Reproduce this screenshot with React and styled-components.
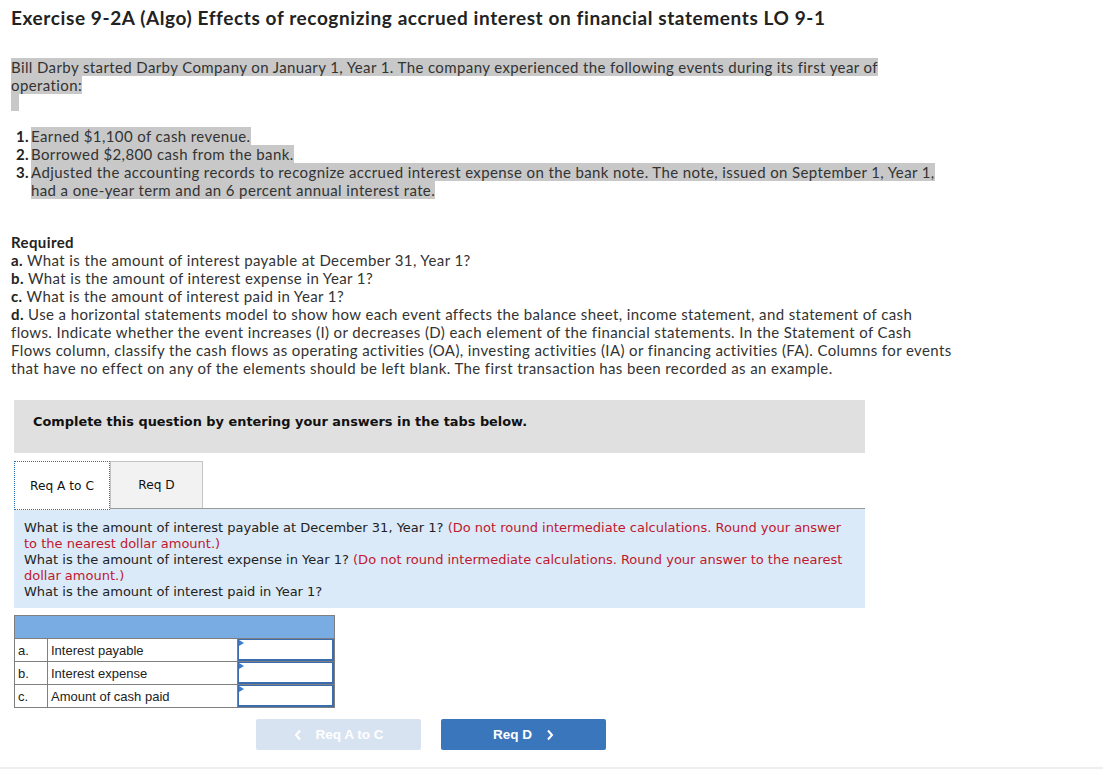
import React from "react";
import styled, { createGlobalStyle } from "styled-components";

const Global = createGlobalStyle`
  html, body { margin: 0; padding: 0; background: #fff; }
  body { font-family: Lato, "Open Sans", sans-serif; color: #333; }
`;

const Page = styled.div`
  width: 1103px;
  height: 775px;
  position: relative;
  overflow: hidden;
  padding: 6px 0 0 11px;
  box-sizing: border-box;
`;

const Title = styled.h1`
  margin: 0;
  font-family: Lato, sans-serif;
  font-weight: 700;
  font-size: 19px;
  letter-spacing: 0.6px;
  line-height: 24px;
  color: #222;
`;

const Intro = styled.p`
  margin: 28px 0 0 0;
  font-size: 15px;
  letter-spacing: 0.39px;
  line-height: 18px;
  width: 885px;
`;

const Mark = styled.span`
  background: #c8c8c8;
`;

const Blank = styled.span`
  display: inline-block;
  width: 8px;
  height: 17px;
  background: #c8c8c8;
  vertical-align: top;
`;

const List = styled.ol`
  list-style: none;
  margin: 15px 0 0 0;
  padding: 0;
  font-size: 15px;
  letter-spacing: 0.39px;
  line-height: 18px;
`;

const Item = styled.li`
  display: grid;
  grid-template-columns: 20px 925px;
`;

const Num = styled.span`
  font-weight: 700;
  padding-left: 5px;
  color: #222;
`;

const Required = styled.div`
  margin-top: 34px;
  font-size: 15px;
  letter-spacing: 0.39px;
  line-height: 18px;
  width: 945px;
`;

const Line = styled.div``;

const B = styled.b`
  font-weight: 700;
  color: #222;
`;

const Content = styled.div`
  margin-left: 3px;
  width: 851px;
`;

const Banner = styled.div`
  margin-top: 23px;
  height: 53px;
  box-sizing: border-box;
  background: #e0e0e0;
  padding: 14px 0 0 19px;
  line-height: 16px;
  font-family: "DejaVu Sans", Verdana, sans-serif;
  font-weight: 700;
  font-size: 12.9px;
  color: #111;
`;

const Tabs = styled.div`
  margin-top: 8px;
  display: flex;
  border-bottom: 1px solid #999;
  height: 47px;
`;

const Tab = styled.div`
  box-sizing: border-box;
  width: ${(p) => p.$w}px;
  height: ${(p) => (p.$active ? 49 : 47)}px;
  display: flex;
  align-items: center;
  justify-content: center;
  font-family: "DejaVu Sans", Tahoma, sans-serif;
  font-size: 12.2px;
  color: #111;
  background: ${(p) => (p.$active ? "#fff" : "#f2f2f2")};
  border: ${(p) => (p.$active ? "1px dotted #2e6fb8" : "1px solid #c4c4c4")};
  border-bottom: ${(p) => (p.$active ? "1px dotted #2e6fb8" : "none")};
  position: relative;
  z-index: ${(p) => (p.$active ? 1 : 0)};
`;

const Prompt = styled.div`
  background: #dbeaf8;
  padding: 11px 10px 8px 10px;
  font-family: "DejaVu Sans", Verdana, sans-serif;
  font-size: 13px;
  line-height: 16px;
  color: #222;
`;

const Red = styled.span`
  color: #c0182e;
`;

const Table = styled.table`
  margin-top: 7px;
  border-collapse: collapse;
  table-layout: fixed;
  width: 320px;
  font-family: "Liberation Sans", Arial, sans-serif;
  font-size: 13px;
  color: #222;
`;

const HeadCell = styled.td`
  background: #78ace2;
  height: 22px;
  border: 1px solid #7f7f7f;
  padding: 0;
`;

const Cell = styled.td`
  border: 1px solid #7f7f7f;
  height: 22px;
  padding: 0 0 0 3px;
  white-space: nowrap;
`;

const InputCell = styled.td`
  border: 1px solid #7f7f7f;
  padding: 0;
  height: 22px;
`;

const InputBox = styled.div`
  box-sizing: border-box;
  height: 22px;
  border-style: solid;
  border-color: #3a6db0;
  border-width: 1px 2px 2px 1px;
  background: #fff;
  position: relative;
`;

const Tri = styled.span`
  position: absolute;
  left: 0;
  top: 0;
  width: 0;
  height: 0;
  border-top: 3px solid transparent;
  border-bottom: 3px solid transparent;
  border-left: 5px solid #3a7ccf;
`;

const Nav = styled.div`
  margin-top: 11px;
  display: flex;
  gap: 20px;
  padding-left: 242px;
`;

const NavBtn = styled.button`
  width: 165px;
  height: 31px;
  border: none;
  border-radius: 2px;
  background: ${(p) => (p.$disabled ? "#d8e3f1" : "#3a76bb")};
  color: #fff;
  font-family: "Liberation Sans", Arial, sans-serif;
  font-weight: 700;
  font-size: 13.5px;
  display: flex;
  align-items: center;
  justify-content: center;
  gap: 14px;
  padding: 0;
  cursor: pointer;
`;

const Chevron = ({ dir }) => (
  <svg width="8" height="12" viewBox="0 0 8 12">
    <path
      d={dir === "left" ? "M6 1.5 L2 6 L6 10.5" : "M2 1.5 L6 6 L2 10.5"}
      fill="none"
      stroke="#fff"
      strokeWidth="2"
    />
  </svg>
);

const Footer = styled.div`
  position: absolute;
  left: 0;
  right: 0;
  top: 767px;
  height: 2px;
  background: #eeeeee;
`;

const rows = [
  ["a.", "Interest payable"],
  ["b.", "Interest expense"],
  ["c.", "Amount of cash paid"],
];

export default function App() {
  return (
    <>
      <Global />
      <Page>
        <Title>
          Exercise 9-2A (Algo) Effects of recognizing accrued interest on financial statements LO 9-1
        </Title>
        <Intro>
          <Mark>
            Bill Darby started Darby Company on January 1, Year 1. The company experienced the following events during its first year of operation:
          </Mark>
          <br />
          <Blank />
        </Intro>
        <List>
          <Item>
            <Num>1.</Num>
            <span>
              <Mark>Earned $1,100 of cash revenue.</Mark>
            </span>
          </Item>
          <Item>
            <Num>2.</Num>
            <span>
              <Mark>Borrowed $2,800 cash from the bank.</Mark>
            </span>
          </Item>
          <Item>
            <Num>3.</Num>
            <span>
              <Mark>
                Adjusted the accounting records to recognize accrued interest expense on the bank note. The note, issued on September 1, Year 1, had a one-year term and an 6 percent annual interest rate.
              </Mark>
            </span>
          </Item>
        </List>
        <Required>
          <Line>
            <B>Required</B>
          </Line>
          <Line>
            <B>a.</B> What is the amount of interest payable at December 31, Year 1?
          </Line>
          <Line>
            <B>b.</B> What is the amount of interest expense in Year 1?
          </Line>
          <Line>
            <B>c.</B> What is the amount of interest paid in Year 1?
          </Line>
          <Line>
            <B>d.</B> Use a horizontal statements model to show how each event affects the balance sheet, income statement, and statement of cash flows. Indicate whether the event increases (I) or decreases (D) each element of the financial statements. In the Statement of Cash Flows column, classify the cash flows as operating activities (OA), investing activities (IA) or financing activities (FA). Columns for events that have no effect on any of the elements should be left blank. The first transaction has been recorded as an example.
          </Line>
        </Required>
        <Content>
          <Banner>Complete this question by entering your answers in the tabs below.</Banner>
          <Tabs>
            <Tab $active $w={96}>Req A to C</Tab>
            <Tab $w={93}>Req D</Tab>
          </Tabs>
          <Prompt>
            What is the amount of interest payable at December 31, Year 1?{" "}
            <Red>(Do not round intermediate calculations. Round your answer to the nearest dollar amount.)</Red>
            <br />
            What is the amount of interest expense in Year 1?{" "}
            <Red>(Do not round intermediate calculations. Round your answer to the nearest dollar amount.)</Red>
            <br />
            What is the amount of interest paid in Year 1?
          </Prompt>
          <Table>
            <colgroup>
              <col style={{ width: 33 }} />
              <col style={{ width: 190 }} />
              <col style={{ width: 97 }} />
            </colgroup>
            <tbody>
              <tr>
                <HeadCell colSpan={3} />
              </tr>
              {rows.map(([l, t]) => (
                <tr key={l}>
                  <Cell>{l}</Cell>
                  <Cell>{t}</Cell>
                  <InputCell>
                    <InputBox>
                      <Tri />
                    </InputBox>
                  </InputCell>
                </tr>
              ))}
            </tbody>
          </Table>
          <Nav>
            <NavBtn $disabled>
              <Chevron dir="left" />
              Req A to C
            </NavBtn>
            <NavBtn>
              Req D
              <Chevron dir="right" />
            </NavBtn>
          </Nav>
        </Content>
        <Footer />
      </Page>
    </>
  );
}
